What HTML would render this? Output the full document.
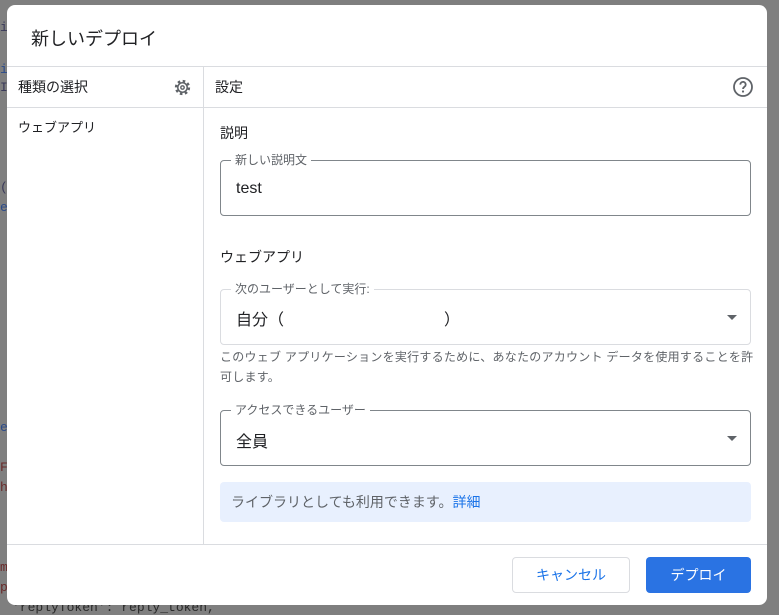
<!DOCTYPE html>
<html><head><meta charset="utf-8"><style>
*{box-sizing:border-box;margin:0;padding:0}
body{width:779px;height:614px;background:#7f7f7f;position:relative;overflow:hidden;font-family:"Liberation Sans","Noto Sans CJK JP",sans-serif;color:#202124}
.bg{position:absolute;font-family:"Liberation Mono",monospace;font-size:13px;color:#3a3a5a}
.dlg{position:absolute;left:7px;top:5px;width:760px;height:600px;background:#fff;border-radius:8px;overflow:hidden}
.abs{position:absolute}
.hl{position:absolute;background:#dadce0}
.fs{position:absolute;left:213px;width:531px;border:1px solid #80868b;border-radius:4px}
.lg{position:absolute;top:-9px;left:10px;background:#fff;padding:0 4px;font-size:12px;color:#5f6368;line-height:16px}
.v{position:absolute;left:15px;font-size:16px;color:#202124}
.arr{position:absolute;right:13px;top:25px;width:0;height:0;border-left:5px solid transparent;border-right:5px solid transparent;border-top:5px solid #5f6368}
</style></head><body>
<div class="bg" style="left:0;top:20px">i</div>
<div class="bg" style="left:0;top:62px;color:#2a4a8a">i</div>
<div class="bg" style="left:0;top:80px">I</div>
<div class="bg" style="left:0;top:180px">(</div>
<div class="bg" style="left:0;top:200px;color:#2a4a8a">e</div>
<div class="bg" style="left:0;top:420px;color:#2a4a8a">e</div>
<div class="bg" style="left:0;top:460px;color:#6a2a2a">F</div>
<div class="bg" style="left:0;top:480px;color:#6a2a2a">h</div>
<div class="bg" style="left:0;top:560px;color:#6a2a2a">m</div>
<div class="bg" style="left:0;top:580px;color:#6a2a2a">p</div>
<div class="bg" style="left:12px;top:600px;color:#2a2a2a">'replyToken': reply_token,</div>
<div class="dlg">
  <div class="abs" style="left:24px;top:22px;font-size:18px;line-height:24px">新しいデプロイ</div>
  <div class="hl" style="left:0;top:61px;width:760px;height:1px"></div>
  <div class="hl" style="left:196px;top:62px;width:1px;height:477px"></div>
  <div class="hl" style="left:0;top:102px;width:760px;height:1px"></div>
  <div class="abs" style="left:11px;top:73px;font-size:14px;line-height:18px">種類の選択</div>
  <svg class="abs" style="left:167px;top:74px" width="17" height="17" viewBox="0 0 18 18"><circle cx="9" cy="9" r="6.8" fill="none" stroke="#5f6368" stroke-width="2.6" stroke-dasharray="2.7 2.64"/><circle cx="9" cy="9" r="5" fill="none" stroke="#5f6368" stroke-width="1.6"/><circle cx="9" cy="9" r="1.8" fill="none" stroke="#5f6368" stroke-width="1.5"/></svg>
  <div class="abs" style="left:208px;top:73px;font-size:14px;line-height:18px">設定</div>
  <svg class="abs" style="left:725px;top:71px" width="22" height="22" viewBox="0 0 22 22"><circle cx="11" cy="11" r="9" fill="none" stroke="#5f6368" stroke-width="1.8"/><path d="M8.3 8.6a2.7 2.7 0 115.1 1.2c-.6 1-2.4 1.5-2.4 3.2" fill="none" stroke="#5f6368" stroke-width="1.8"/><circle cx="11" cy="15.5" r="1.1" fill="#5f6368"/></svg>
  <div class="abs" style="left:11px;top:114px;font-size:13px;line-height:18px">ウェブアプリ</div>
  <div class="abs" style="left:213px;top:119px;font-size:14px;line-height:18px">説明</div>
  <div class="fs" style="top:155px;height:56px"><div class="lg">新しい説明文</div><div class="v" style="top:19px">test</div></div>
  <div class="abs" style="left:213px;top:243px;font-size:14px;line-height:18px">ウェブアプリ</div>
  <div class="fs" style="top:284px;height:56px;border-color:#dadce0"><div class="lg">次のユーザーとして実行:</div><div class="v" style="top:16px">自分（　　　　　　　　　　）</div><div class="arr"></div></div>
  <div class="abs" style="left:213px;top:342px;width:534px;font-size:12px;line-height:20px;color:#5f6368;letter-spacing:0.25px">このウェブ アプリケーションを実行するために、あなたのアカウント データを使用することを許可します。</div>
  <div class="fs" style="top:405px;height:56px"><div class="lg">アクセスできるユーザー</div><div class="v" style="top:17px">全員</div><div class="arr"></div></div>
  <div class="abs" style="left:213px;top:477px;width:531px;height:40px;background:#e8f0fe;border-radius:4px;font-size:14px;line-height:40px;padding-left:11px;color:#5f6368">ライブラリとしても利用できます。<span style="color:#1a73e8">詳細</span></div>
  <div class="hl" style="left:0;top:539px;width:760px;height:1px"></div>
  <div class="abs" style="left:505px;top:552px;width:118px;height:36px;border:1px solid #dadce0;border-radius:4px;font-size:14px;line-height:34px;text-align:center;color:#1a73e8">キャンセル</div>
  <div class="abs" style="left:639px;top:552px;width:105px;height:36px;background:#2a73e3;border-radius:4px;font-size:14px;line-height:36px;text-align:center;color:#fff">デプロイ</div>
</div>
</body></html>
